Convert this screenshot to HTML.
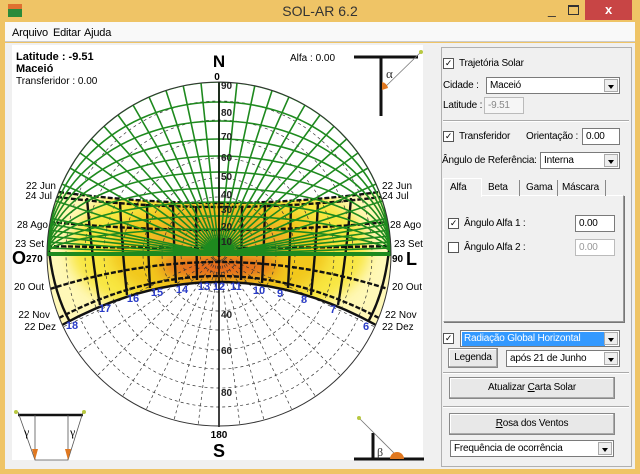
<!DOCTYPE html>
<html><head><meta charset="utf-8"><style>
*{margin:0;padding:0;box-sizing:border-box}
body{width:640px;height:474px;background:#efc466;font-family:"Liberation Sans",sans-serif;font-size:10px;letter-spacing:-0.2px;color:#000;position:relative;overflow:hidden}
.a{position:absolute;white-space:nowrap}
.box{position:absolute;background:#fff;border:1px solid #7a7a7a;height:17px;padding:1px 3px;font-size:10px;line-height:14px;white-space:nowrap}
.dd{position:absolute;right:1px;top:1px;width:14px;height:13px;background:#eee;border:1px solid #aaa}
.dd:after{content:"";position:absolute;left:3px;top:5px;border:3px solid transparent;border-top:4px solid #000}
.cb{position:absolute;width:11px;height:11px;border:1px solid #555;background:#fff;font-size:9px;line-height:9px;text-align:center}
.btn{position:absolute;background:#e8e8e8;border:1px solid #888;box-shadow:inset -1px -1px #aaa,inset 1px 1px #fff;text-align:center;font-size:10px}
.sep{position:absolute;left:443px;width:186px;border-top:1px solid #aaa;border-bottom:1px solid #fff}
</style></head><body>
<div class="a" style="left:8px;top:4px;width:14px;height:13px;background:#2a8a3a;border-top:5px solid #e07030"></div>
<div class="a" style="left:0;top:3px;width:640px;text-align:center;font-size:14px;color:#333;letter-spacing:0">SOL-AR 6.2</div>
<div class="a" style="left:548px;top:1px;font-size:14px;color:#333">_</div>
<div class="a" style="left:568px;top:5px;width:11px;height:10px;border:1px solid #333;border-top-width:2px"></div>
<div class="a" style="left:585px;top:0;width:47px;height:20px;background:#c84545;color:#fff;text-align:center;font-size:13px;font-weight:bold;line-height:19px">x</div>
<div class="a" style="left:5px;top:22px;width:630px;height:20px;background:#f9f9f9;border-bottom:1px solid #ccc"></div>
<div class="a" style="left:12px;top:27px;font-size:11px">Arquivo</div>
<div class="a" style="left:53px;top:27px;font-size:11px">Editar</div>
<div class="a" style="left:84px;top:27px;font-size:11px">Ajuda</div>
<div class="a" style="left:5px;top:43px;width:630px;height:426px;background:#f0f0f0"></div>
<div class="a" style="left:12px;top:45px;width:411px;height:415px;background:#fff"></div>
<svg class="a" style="left:0;top:0;letter-spacing:0" width="640" height="474" font-family="Liberation Sans, sans-serif">
<defs>
<clipPath id="c"><circle cx="219" cy="254" r="172"/></clipPath>
<clipPath id="band"><path d="M59 192 Q219 214 379 192 A172 172 0 0 1 376 325 Q219 239 62 325 A172 172 0 0 1 59 192Z"/></clipPath>
<filter id="bl"><feGaussianBlur stdDeviation="7"/></filter>
</defs>
<circle cx="219" cy="254" r="172" fill="#fff"/>
<g clip-path="url(#band)">
<rect x="40" y="180" width="360" height="160" fill="#fff8b8"/>
<g filter="url(#bl)">
<ellipse cx="219" cy="250" rx="150" ry="75" fill="#f8e640"/>
<ellipse cx="219" cy="252" rx="110" ry="55" fill="#f2c81e"/>
<ellipse cx="219" cy="240" rx="70" ry="30" fill="#eeb020"/>
<ellipse cx="219" cy="268" rx="60" ry="12" fill="#e4601a"/>
</g>
</g>
<g clip-path="url(#c)" fill="none" stroke="#333" stroke-width="0.7" stroke-dasharray="3 3">
<circle cx="219" cy="254" r="19"/><circle cx="219" cy="254" r="38"/><circle cx="219" cy="254" r="57"/><circle cx="219" cy="254" r="76"/><circle cx="219" cy="254" r="96"/><circle cx="219" cy="254" r="115"/><circle cx="219" cy="254" r="134"/><circle cx="219" cy="254" r="153"/>
<path d="M219 254 L375 327 M219 254 L360 353 M219 254 L340 375 M219 254 L318 400 M219 254 L292 410 M219 254 L264 420 M219 254 L240 426 M219 254 L63 327 M219 254 L78 353 M219 254 L98 375 M219 254 L120 400 M219 254 L146 410 M219 254 L174 420 M219 254 L198 426"/>
</g>
<g fill="none" stroke="#111" stroke-width="2.4" clip-path="url(#c)">
<path d="M59 192 Q219 214 379 192" stroke-dasharray="5 2"/>
<path d="M57 197 Q219 217 381 197" stroke-dasharray="5 2"/>
<path d="M50 222 Q219 238 388 222" stroke-dasharray="5 2"/>
<path d="M47 246 Q219 250 391 246" stroke-dasharray="5 2"/>
<path d="M50 289 Q219 235 388 289" stroke-dasharray="5 2"/>
<path d="M59 318 Q219 234 379 318" stroke-dasharray="5 2"/>
<path d="M62 325 Q219 239 376 325"/>
<path d="M48 240 Q52 290 70 322"/><path d="M390 240 Q386 290 368 322"/>
<path d="M87 198 Q92 260 100 305"/><path d="M351 198 Q346 260 338 305"/>
<path d="M120 202 Q122 250 127 295"/><path d="M318 202 Q316 250 311 295"/>
<path d="M147 204 Q148 250 150 288"/><path d="M291 204 Q290 250 288 288"/>
<path d="M173 205 Q174 250 176 283"/><path d="M265 205 Q264 250 262 283"/>
<path d="M196 206 L197 280"/><path d="M242 206 L241 280"/>
</g>
<g clip-path="url(#c)" fill="none" stroke="#1e8a1e" stroke-width="1.6">
<path d="M47 254 A172 172 0 0 1 391 254 M47 254 A172 152 0 0 1 391 254 M47 254 A172 133 0 0 1 391 254 M47 254 A172 115 0 0 1 391 254 M47 254 A172 98 0 0 1 391 254 M47 254 A172 82 0 0 1 391 254 M47 254 A172 66 0 0 1 391 254 M47 254 A172 52 0 0 1 391 254 M47 254 A172 38 0 0 1 391 254 M47 254 A172 25 0 0 1 391 254"/>
<path d="M219 254 L391 248 M219 254 L390.6 242 M219 254 L389.3 230 M219 254 L388.4 224 M219 254 L390.1 236 M219 254 L387.2 218.2 M219 254 L382.6 200.9 M219 254 L376.1 184 M219 254 L368 168 M219 254 L358.1 152.9 M219 254 L346.8 138.9 M219 254 L334.1 126.2 M219 254 L320.1 114.9 M219 254 L305 105 M219 254 L289 96.9 M219 254 L272.1 90.4 M219 254 L254.8 85.8 M219 254 L237 82.9 M219 254 L219 82
M219 254 L47 248 M219 254 L47.4 242 M219 254 L48.7 230 M219 254 L49.6 224 M219 254 L47.9 236 M219 254 L50.8 218.2 M219 254 L55.4 200.9 M219 254 L61.9 184 M219 254 L70 168 M219 254 L79.9 152.9 M219 254 L91.2 138.9 M219 254 L103.9 126.2 M219 254 L117.9 114.9 M219 254 L133 105 M219 254 L149 96.9 M219 254 L165.9 90.4 M219 254 L183.2 85.8 M219 254 L201 82.9"/>
<path d="M47 254 L391 254" stroke-width="4"/>
</g>
<path d="M219 82 L219 427" stroke="#000" stroke-width="1.5"/>
<circle cx="219" cy="254" r="172" fill="none" stroke="#333" stroke-width="1"/>
<g font-size="10" fill="#000">
<text x="16" y="60" font-weight="bold" font-size="11">Latitude :  -9.51</text>
<text x="16" y="72" font-weight="bold" font-size="11">Maceió</text>
<text x="16" y="84">Transferidor : 0.00</text>
<text x="290" y="61">Alfa : 0.00</text>
<text x="219" y="67" font-weight="bold" font-size="17" text-anchor="middle">N</text>
<text x="217" y="80" font-weight="bold" font-size="10" text-anchor="middle">0</text>
<g font-weight="bold" font-size="10" fill="#222">
<text x="221" y="89">90</text><text x="221" y="116">80</text><text x="221" y="140">70</text><text x="221" y="161">60</text><text x="221" y="180">50</text><text x="221" y="198">40</text><text x="221" y="213">30</text><text x="221" y="230">20</text><text x="221" y="245">10</text>
<text x="221" y="318">40</text><text x="221" y="354">60</text><text x="221" y="396">80</text>
</g>
<g text-anchor="end">
<text x="56" y="189">22 Jun</text><text x="52" y="199">24 Jul</text><text x="48" y="228">28 Ago</text><text x="44" y="247">23 Set</text><text x="44" y="290">20 Out</text><text x="50" y="318">22 Nov</text><text x="56" y="330">22 Dez</text>
</g>
<text x="382" y="189">22 Jun</text><text x="382" y="199">24 Jul</text><text x="390" y="228">28 Ago</text><text x="394" y="247">23 Set</text><text x="392" y="290">20 Out</text><text x="385" y="318">22 Nov</text><text x="382" y="330">22 Dez</text>
<text x="12" y="264" font-weight="bold" font-size="18">O</text><text x="26" y="262" font-weight="bold" font-size="10">270</text>
<text x="392" y="262" font-weight="bold" font-size="10">90</text><text x="406" y="265" font-weight="bold" font-size="18">L</text>
<text x="219" y="438" text-anchor="middle" font-weight="bold" font-size="10">180</text>
<text x="219" y="457" text-anchor="middle" font-weight="bold" font-size="18">S</text>
</g>
<g font-size="11" font-weight="bold" fill="#2a3cc8" text-anchor="middle">
<text x="72" y="329">18</text><text x="105" y="312">17</text><text x="133" y="302">16</text><text x="157" y="296">15</text><text x="182" y="293">14</text><text x="204" y="290">13</text><text x="219" y="290">12</text><text x="236" y="290">11</text><text x="259" y="294">10</text><text x="280" y="297">9</text><text x="304" y="303">8</text><text x="333" y="313">7</text><text x="366" y="330">6</text>
</g>
<g>
<path d="M354 57 L418 57 M381 57 L381 116" stroke="#111" stroke-width="3"/>
<path d="M382 90 L421 52" stroke="#777" stroke-width="0.8"/>
<path d="M382 82 A8 8 0 0 1 388 88 L382 90Z" fill="#e07820"/>
<circle cx="421" cy="52" r="2" fill="#b8c840"/>
<text x="386" y="78" font-size="13" fill="#333" font-family="Liberation Serif, serif">α</text>
<path d="M18 415 L83 415" stroke="#111" stroke-width="2.5"/>
<path d="M18 412 L35 460 L68 460 L83 412 M35 415 L35 460 M68 415 L68 460" stroke="#555" stroke-width="0.8" fill="none"/>
<path d="M32 449 L38 449 L35 460Z M65 449 L71 449 L68 460Z" fill="#e07820"/>
<circle cx="16" cy="412" r="2" fill="#b8c840"/><circle cx="84" cy="412" r="2" fill="#b8c840"/>
<text x="24" y="436" font-size="12" font-family="Liberation Serif, serif">γ</text><text x="70" y="436" font-size="12" font-family="Liberation Serif, serif">γ</text>
<path d="M354 459 L424 459 M373 433 L373 459" stroke="#111" stroke-width="3"/>
<path d="M359 418 L400 459" stroke="#777" stroke-width="0.8"/>
<path d="M390 459 A7 7 0 0 1 404 459Z" fill="#e07820"/>
<circle cx="359" cy="418" r="2" fill="#b8c840"/>
<text x="377" y="456" font-size="12" fill="#333" font-family="Liberation Serif, serif">β</text>
</g>
</svg>
<div class="a" style="left:441px;top:47px;width:191px;height:420px;border:1px solid #b0b0b0"></div>
<div class="cb" style="left:443px;top:58px">✓</div><div class="a" style="left:459px;top:58px">Trajetória Solar</div>
<div class="a" style="left:443px;top:80px">Cidade :</div>
<div class="box" style="left:486px;top:77px;width:134px">Maceió<div class="dd"></div></div>
<div class="a" style="left:443px;top:100px">Latitude :</div>
<div class="box" style="left:484px;top:97px;width:40px;color:#888;background:#f6f6f6;border-color:#bbb">-9.51</div>
<div class="sep" style="top:120px"></div>
<div class="cb" style="left:443px;top:131px">✓</div><div class="a" style="left:459px;top:131px">Transferidor</div>
<div class="a" style="left:526px;top:131px">Orientação :</div>
<div class="box" style="left:582px;top:128px;width:38px">0.00</div>
<div class="a" style="left:442px;top:155px">Ângulo de Referência:</div>
<div class="box" style="left:540px;top:152px;width:80px">Interna<div class="dd"></div></div>
<div class="a" style="left:443px;top:195px;width:181px;height:127px;border:1px solid #999;border-left-color:#fff;border-top-color:#fff;box-shadow:1px 1px #777"></div>
<div class="a" style="left:443px;top:178px;width:39px;height:19px;background:#f0f0f0;border:1px solid #fff;border-bottom:none;padding:3px 6px">Alfa</div>
<div class="a" style="left:484px;top:180px;width:36px;height:16px;border-right:1px solid #888;padding:2px 4px">Beta</div>
<div class="a" style="left:522px;top:180px;width:36px;height:16px;border-right:1px solid #888;padding:2px 4px">Gama</div>
<div class="a" style="left:560px;top:180px;width:46px;height:16px;border-right:1px solid #888;padding:2px 2px">Máscara</div>
<div class="cb" style="left:448px;top:218px">✓</div><div class="a" style="left:464px;top:218px">Ângulo Alfa 1 :</div>
<div class="box" style="left:575px;top:215px;width:40px">0.00</div>
<div class="cb" style="left:448px;top:242px"></div><div class="a" style="left:464px;top:242px">Ângulo Alfa 2 :</div>
<div class="box" style="left:575px;top:239px;width:40px;color:#999;border-color:#bbb">0.00</div>
<div class="cb" style="left:443px;top:333px">✓</div>
<div class="box" style="left:460px;top:330px;width:160px;padding:1px"><span style="display:block;background:#3399ff;color:#fff;width:143px;padding-left:2px">Radiação Global Horizontal</span><div class="dd"></div></div>
<div class="btn" style="left:448px;top:348px;width:50px;height:20px;line-height:18px">Legenda</div>
<div class="box" style="left:506px;top:350px;width:114px">após 21 de Junho<div class="dd"></div></div>
<div class="sep" style="top:372px"></div>
<div class="btn" style="left:449px;top:377px;width:166px;height:22px;line-height:20px">Atualizar <u>C</u>arta Solar</div>
<div class="sep" style="top:406px"></div>
<div class="btn" style="left:449px;top:413px;width:166px;height:22px;line-height:20px"><u>R</u>osa dos Ventos</div>
<div class="box" style="left:450px;top:440px;width:164px">Frequência de ocorrência<div class="dd"></div></div>
</body></html>
